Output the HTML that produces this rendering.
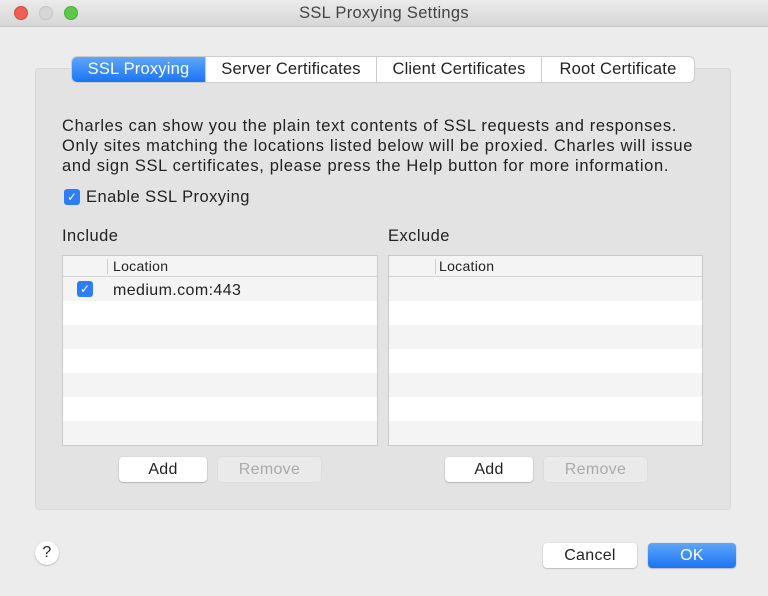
<!DOCTYPE html>
<html><head><style>
*{box-sizing:border-box;margin:0;padding:0}
body{width:768px;height:596px;background:#ececec;font-family:"Liberation Sans",sans-serif;position:relative;overflow:hidden;color:#222}
.a{position:absolute}
.title{left:0;top:0;width:768px;height:27px;background:linear-gradient(#ebebeb,#d6d6d6);border-bottom:1px solid #c8c8c8;text-align:center;font-size:16.5px;letter-spacing:0.3px;line-height:27px;color:#444}
.dot{top:6px;width:14px;height:14px;border-radius:50%}
.group{left:35px;top:68px;width:696px;height:442px;background:#e3e3e3;border:1px solid #d8d8d8;border-radius:4px}
.tabs{left:72px;top:57px;height:25px;display:flex;border-radius:5px;background:#fff;box-shadow:0 0 0 1px #ccc;font-size:16.5px;letter-spacing:0.2px;line-height:25px}
.tabs div{border-left:1px solid #ccc;text-align:center}
.tabs .sel{background:linear-gradient(#5fa6f9,#1b74f5);color:#fff;border-radius:5px 0 0 5px;border:none}
.txt{font-size:16.5px;letter-spacing:0.65px;line-height:20px;color:#222;white-space:nowrap}
.cb{width:16px;height:16px;border-radius:3px;background:#2e7cf6;color:#fff;font-size:12px;line-height:16px;text-align:center}
.tbl{top:255px;width:316px;height:191px;border:1px solid #c9c9c9;background:repeating-linear-gradient(#f4f4f4 0 24px,#fff 24px 48px);background-position:0 21px}
.hdr{left:0;top:0;right:0;height:21px;background:#f4f4f4;border-bottom:1px solid #d3d3d3;font-size:14px;letter-spacing:0.3px;line-height:21px}
.btn{height:25px;border-radius:4px;background:#fff;box-shadow:0 0.5px 1.5px rgba(0,0,0,.35);font-size:16px;letter-spacing:0.3px;line-height:25px;text-align:center}
.dis{background:#eaeaea;color:#aaa;box-shadow:0 0 0 1px #ddd}
</style></head><body>
<div class="a title">SSL Proxying Settings</div>
<div class="a dot" style="left:14px;background:#ee5f57;border:1px solid #d9483f"></div>
<div class="a dot" style="left:39px;background:#d6d6d6;border:1px solid #c5c5c5"></div>
<div class="a dot" style="left:64px;background:#5fc84a;border:1px solid #4aae37"></div>
<div class="a group"></div>
<div class="a tabs"><div class="sel" style="width:133px">SSL Proxying</div><div style="width:171px">Server Certificates</div><div style="width:165px">Client Certificates</div><div style="width:153px">Root Certificate</div></div>
<div class="a txt" style="left:62px;top:116px">Charles can show you the plain text contents of SSL requests and responses.<br>Only sites matching the locations listed below will be proxied. Charles will issue<br>and sign SSL certificates, please press the Help button for more information.</div>
<div class="a cb" style="left:64px;top:189px">✓</div>
<div class="a txt" style="left:86px;top:187px;letter-spacing:0.45px">Enable SSL Proxying</div>
<div class="a txt" style="left:62px;top:226px;letter-spacing:0.45px">Include</div>
<div class="a txt" style="left:388px;top:226px;letter-spacing:0.45px">Exclude</div>
<div class="a tbl" style="left:62px"><div class="a hdr"><span class="a" style="left:44px;top:3px;height:15px;border-left:1px solid #ccc"></span><span class="a" style="left:50px">Location</span></div>
<div class="a cb" style="left:14px;top:25px">✓</div><div class="a" style="left:50px;top:24px;font-size:16px;letter-spacing:0.4px;line-height:22px">medium.com:443</div></div>
<div class="a tbl" style="left:388px;width:315px"><div class="a hdr"><span class="a" style="left:46px;top:3px;height:15px;border-left:1px solid #ccc"></span><span class="a" style="left:50px">Location</span></div></div>
<div class="a btn" style="left:119px;top:457px;width:88px">Add</div>
<div class="a btn dis" style="left:218px;top:457px;width:103px">Remove</div>
<div class="a btn" style="left:445px;top:457px;width:88px">Add</div>
<div class="a btn dis" style="left:544px;top:457px;width:103px">Remove</div>
<div class="a btn" style="left:35px;top:541px;width:24px;height:24px;border-radius:50%;line-height:24px">?</div>
<div class="a btn" style="left:543px;top:543px;width:94px">Cancel</div>
<div class="a btn" style="left:648px;top:543px;width:88px;background:linear-gradient(#5fa6f9,#1b74f5);color:#fff">OK</div>
</body></html>
